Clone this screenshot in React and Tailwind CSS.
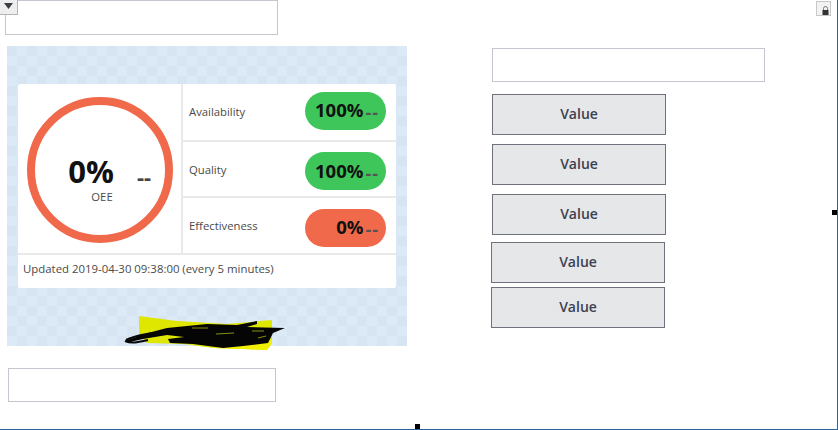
const font = { fontFamily: '"Open Sans", sans-serif' };

const Field = ({ className }) => (
  <div className={`border border-[#c4c7d0] bg-white ${className}`}></div>
);

const ValueButton = ({ className = '' }) => (
  <button className={`block h-[41px] w-[174px] border border-[#6f717c] bg-[#e6e7e9] pb-[2px] text-center text-[14px] font-semibold text-[#3c4150] ${className}`}>
    Value
  </button>
);

const Metric = ({ label, value, color, rowClass, labelClass = '', pillClass = '' }) => (
  <div className={`flex items-center pr-[10px] pl-[6px] ${rowClass}`}>
    <span className={`flex-1 text-[11.3px] text-[#4a4a4a] ${labelClass}`}>{label}</span>
    <div className={`flex h-[38px] w-[81px] items-center justify-end rounded-full pr-[7px] ${color} ${pillClass}`}>
      <span className="text-[18.5px] leading-none font-bold text-[#111]">{value}</span>
      <span className="mt-[3px] ml-[2px] text-[18px] leading-none font-bold tracking-[1px] text-[#555]">--</span>
    </div>
  </div>
);

const Scribble = () => (
  <svg className="absolute top-[314px] left-[124px]" width="164" height="40" viewBox="0 0 164 40">
    <polygon fill="#dfe600" points="15,2 53,7 103,10 148,6 148,29 143,36 89,34 60,30 23,29 15,19" />
    <polygon fill="#f0f000" points="89,28 148,25 148,29 143,36 89,34" />
    <polygon
      fill="#050505"
      points="1,27 20,20 43,14 83,10 113,11 133,7 133,10 123,13 161,14 149,19 144,29 119,32 99,34 69,30 46,29 44,25 60,23 43,21 19,25 6,28"
    />
    <path d="M1,27 C8,30 15,28 24,26 M2,26 C14,20 30,19 44,18" fill="none" stroke="#050505" strokeWidth="2" />
    <path d="M68,14 L84,14 M92,20 L110,19 M128,17 L140,17 M134,24 L142,22" fill="none" stroke="#8a8f10" strokeWidth="1" />
  </svg>
);

const App = () => {
  return (
    <div className="relative flex h-[430px] w-[838px] overflow-hidden border-r border-b border-[#2a6496] bg-white" style={font}>
      <div className="w-[407px] shrink-0">
        <Field className="ml-[5px] h-[35px] w-[273px]" />
        <div className="mt-[11px] ml-[7px] h-[300px] w-[400px] bg-[repeating-conic-gradient(#dce9f6_0_25%,#d7e4f1_0_50%)] bg-size-[20px_20px] pt-[38px] pl-[11px]">
          <div className="h-[204px] w-[378px] rounded-[2px] bg-white">
            <div className="flex h-[171px] border-b-2 border-[#e9e9e9]">
              <div className="flex w-[165px] shrink-0 items-center justify-center border-r-2 border-[#e9e9e9] pt-[3px] pl-px">
                <div className="relative flex h-[146px] w-[146px] flex-col items-center rounded-full border-[8px] border-[#f0694a] pt-[51px]">
                  <span className="mr-[18px] text-[31px] leading-[30px] font-bold text-[#111]">0%</span>
                  <span className="mt-[6px] ml-[4px] text-[11.3px] leading-[10px] text-[#4a4a4a]">OEE</span>
                  <span className="absolute top-[59px] left-[102px] text-[22px] leading-[24px] font-bold text-[#444]">--</span>
                </div>
              </div>
              <div className="flex-1">
                <Metric label="Availability" value="100%" color="bg-[#3ec65a]" rowClass="h-[58px] border-b-2 border-[#e9e9e9]" pillClass="mb-[3px]" />
                <Metric label="Quality" value="100%" color="bg-[#3ec65a]" rowClass="h-[56px] border-b-2 border-[#e9e9e9]" labelClass="mt-[3px]" pillClass="mt-[4px]" />
                <Metric label="Effectiveness" value="0%" color="bg-[#f0694a]" rowClass="h-[55px]" labelClass="mt-[2px]" pillClass="mt-[4px]" />
              </div>
            </div>
            <div className="pt-[6px] pl-[5px] text-[11.4px] leading-[16px] text-[#4a4a4a]">
              Updated 2019-04-30 09:38:00 (every 5 minutes)
            </div>
          </div>
        </div>
        <Field className="mt-[22px] ml-[8px] h-[34px] w-[268px]" />
      </div>

      <div className="ml-[84px] pt-[48px]">
        <Field className="ml-px h-[34px] w-[273px]" />
        <ValueButton className="mt-[12px] ml-px" />
        <ValueButton className="mt-[9px] ml-px" />
        <ValueButton className="mt-[9px] ml-px" />
        <ValueButton className="mt-[7px]" />
        <ValueButton className="mt-[4px]" />
      </div>

      {/* designer chrome lying over the canvas */}
      <div className="absolute top-0 left-0 flex h-[15px] w-[18px] justify-center border-r border-b border-[#b4b4b4] bg-[#eeeeee] pt-[3px]">
        <svg width="9" height="6" viewBox="0 0 9 6"><polygon points="0,0 9,0 4.5,6" fill="#3a3f44" /></svg>
      </div>
      <div className="absolute top-px left-[816px] flex h-[15px] w-[15px] items-end justify-end border border-[#c8c8c8] bg-[#f2f2f2] pr-px">
        <svg width="7" height="9" viewBox="0 0 7 9">
          <path d="M1.5,4 V2.5 a2,2 0 0 1 4,0 V4" fill="none" stroke="#777" strokeWidth="1" />
          <rect x="0.5" y="4" width="6" height="5" fill="#333" />
        </svg>
      </div>
      <div className="absolute top-[210px] left-[832px] h-[5px] w-[5px] bg-black"></div>
      <div className="absolute top-[424px] left-[415px] h-[5px] w-[5px] bg-black"></div>
      <Scribble />
    </div>
  );
};

export default App;
